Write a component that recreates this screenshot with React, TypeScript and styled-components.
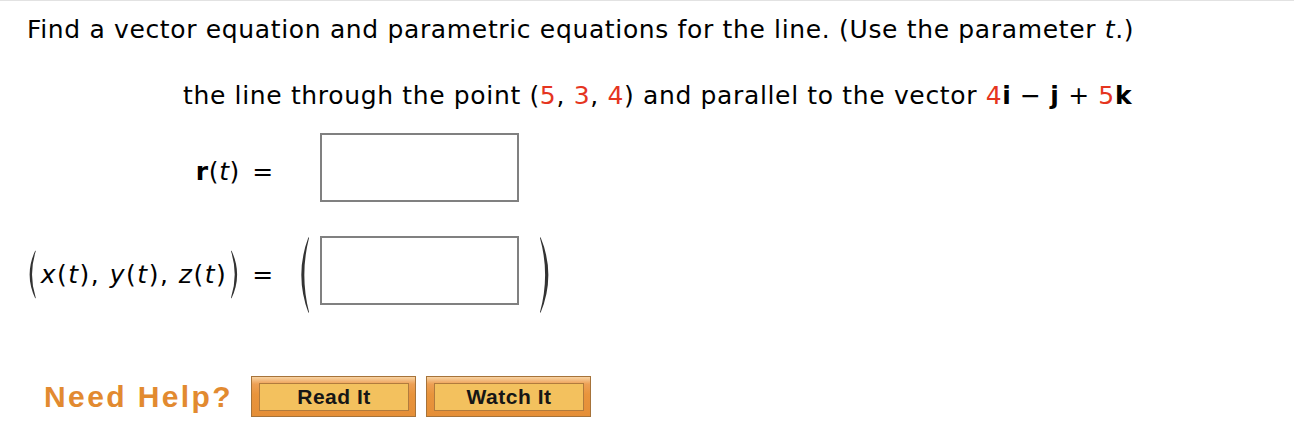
import React from "react";
import styled, { createGlobalStyle } from "styled-components";

const Global = createGlobalStyle`
  html, body { margin: 0; padding: 0; background: #fff; }
  body { font-family: "DejaVu Sans", Verdana, sans-serif; color: #000; }
`;

const Page = styled.div`
  width: 1294px;
  height: 444px;
  box-sizing: border-box;
  border-top: 1px solid #e2e2e2;
  padding: 14px 0 0 27px;
  font-size: 25px;
  letter-spacing: 0.65px;
  line-height: 30px;
`;

const Prompt = styled.div`
  white-space: nowrap;
`;

const Statement = styled.div`
  margin: 36px 0 0 156px;
  white-space: nowrap;
`;

const Red = styled.span`
  color: #e5351f;
`;

const Bold = styled.b`
  font-weight: bold;
`;

const Grid = styled.div`
  display: grid;
  grid-template-columns: 213px 46px 34px 199px 40px;
  row-gap: 34px;
  align-items: start;
  margin-top: 22px;
`;

const Label = styled.div<{ $top: number }>`
  display: flex;
  align-items: center;
  justify-content: flex-end;
  white-space: nowrap;
  margin-top: ${(p) => p.$top}px;
`;

const Eq = styled.div`
  text-align: center;
  margin-top: 24px;
`;

const ParenCell = styled.div<{ $side: "left" | "right" }>`
  display: flex;
  justify-content: ${(p) => (p.$side === "left" ? "flex-end" : "flex-start")};
  padding: ${(p) => (p.$side === "left" ? "0 11px 0 0" : "0 0 0 21px")};
  margin-top: 1px;
`;

const AnswerBox = styled.div`
  box-sizing: border-box;
  width: 199px;
  height: 69px;
  border: 2px solid #808080;
  background: #fff;
`;

const Ital = styled.i`
  font-style: italic;
`;

const Vars = styled.span`
  margin: 0 4px 0 5px;
  letter-spacing: 1.5px;
`;

const Help = styled.div`
  display: flex;
  align-items: center;
  margin-top: 63px;
  padding-left: 17px;
`;

const HelpText = styled.div`
  font-family: "Liberation Sans", Arial, sans-serif;
  font-weight: bold;
  font-size: 30px;
  letter-spacing: 2.4px;
  color: #e28a30;
  margin-right: 18px;
  line-height: 34px;
`;

const HelpButton = styled.div`
  box-sizing: border-box;
  width: 165px;
  height: 41px;
  border: 1px solid #a6733a;
  background: linear-gradient(#f8d3a3 0%, #eda055 18%, #e8943c 45%, #e58f38 100%);
  padding: 6px 6px 5px 7px;
  margin-right: 10px;
`;

const ButtonFace = styled.div`
  box-sizing: border-box;
  height: 100%;
  border: 1px solid #b17b3d;
  background: #f3c15e;
  display: flex;
  align-items: center;
  justify-content: center;
  font-family: "Liberation Sans", Arial, sans-serif;
  font-weight: bold;
  font-size: 21px;
  letter-spacing: 0.5px;
  color: #161616;
`;

const Paren = ({ side, h, w }: { side: "left" | "right"; h: number; w: number }) => {
  const d =
    side === "left"
      ? `M${w - 0.5},0 Q${-w * 0.35},${h / 2} ${w - 0.5},${h} L${w},${h - 1} Q${w * 0.15},${h / 2} ${w},1 Z`
      : `M0.5,0 Q${w * 1.35},${h / 2} 0.5,${h} L0,${h - 1} Q${w * 0.85},${h / 2} 0,1 Z`;
  return (
    <svg width={w} height={h} viewBox={`0 0 ${w} ${h}`} style={{ display: "block" }}>
      <path d={d} fill="#333" />
    </svg>
  );
};

export default function App() {
  return (
    <>
      <Global />
      <Page>
        <Prompt>
          Find a vector equation and parametric equations for the line. (Use the parameter <Ital>t</Ital>.)
        </Prompt>
        <Statement>
          the line through the point (<Red>5</Red>, <Red>3</Red>, <Red>4</Red>) and parallel to the vector{" "}
          <Red>4</Red>
          <Bold>i</Bold> − <Bold>j</Bold> + <Red>5</Red>
          <Bold>k</Bold>
        </Statement>
        <Grid>
          <Label $top={24}>
            <Bold>r</Bold>(<Ital>t</Ital>)
          </Label>
          <Eq>=</Eq>
          <ParenCell $side="left" />
          <AnswerBox />
          <ParenCell $side="right" />

          <Label $top={11}>
            <Paren side="left" h={55} w={10} />
            <Vars>
              <Ital>x</Ital>(<Ital>t</Ital>), <Ital>y</Ital>(<Ital>t</Ital>), <Ital>z</Ital>(<Ital>t</Ital>)
            </Vars>
            <Paren side="right" h={55} w={10} />
          </Label>
          <Eq>=</Eq>
          <ParenCell $side="left">
            <Paren side="left" h={76} w={11} />
          </ParenCell>
          <AnswerBox />
          <ParenCell $side="right">
            <Paren side="right" h={76} w={12} />
          </ParenCell>
        </Grid>
        <Help>
          <HelpText>Need Help?</HelpText>
          <HelpButton>
            <ButtonFace>Read It</ButtonFace>
          </HelpButton>
          <HelpButton>
            <ButtonFace>Watch It</ButtonFace>
          </HelpButton>
        </Help>
      </Page>
    </>
  );
}
